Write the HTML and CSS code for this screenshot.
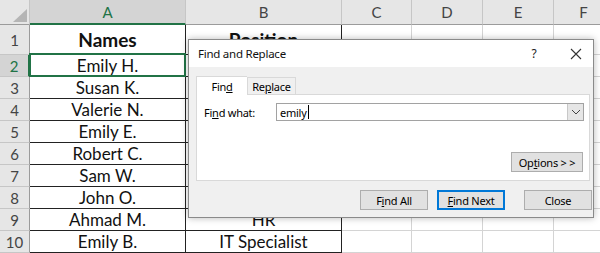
FILE: index.html
```html
<!DOCTYPE html>
<html>
<head>
<meta charset="utf-8">
<title>Find and Replace</title>
<link rel="stylesheet" href="styles.css">
</head>
<body>
<div class="sheet">
  <div class="corner"><svg width="30" height="25" viewBox="0 0 30 25"><polygon points="13,22 27,22 27,9" fill="#b5b5b5"/></svg></div>
  <div class="ch sel">A</div><div class="ch">B</div><div class="ch">C</div><div class="ch">D</div><div class="ch">E</div><div class="ch">F</div>

  <div class="rh">1</div><div class="c t th">Names</div><div class="c t th">Position</div><div class="c"></div><div class="c"></div><div class="c"></div><div class="c"></div>
  <div class="rh sel">2</div><div class="c t active">Emily H.</div><div class="c t"></div><div class="c"></div><div class="c"></div><div class="c"></div><div class="c"></div>
  <div class="rh">3</div><div class="c t">Susan K.</div><div class="c t"></div><div class="c"></div><div class="c"></div><div class="c"></div><div class="c"></div>
  <div class="rh">4</div><div class="c t">Valerie N.</div><div class="c t"></div><div class="c"></div><div class="c"></div><div class="c"></div><div class="c"></div>
  <div class="rh">5</div><div class="c t">Emily E.</div><div class="c t"></div><div class="c"></div><div class="c"></div><div class="c"></div><div class="c"></div>
  <div class="rh">6</div><div class="c t">Robert C.</div><div class="c t"></div><div class="c"></div><div class="c"></div><div class="c"></div><div class="c"></div>
  <div class="rh">7</div><div class="c t">Sam W.</div><div class="c t"></div><div class="c"></div><div class="c"></div><div class="c"></div><div class="c"></div>
  <div class="rh">8</div><div class="c t">John O.</div><div class="c t"></div><div class="c"></div><div class="c"></div><div class="c"></div><div class="c"></div>
  <div class="rh">9</div><div class="c t">Ahmad M.</div><div class="c t">HR</div><div class="c"></div><div class="c"></div><div class="c"></div><div class="c"></div>
  <div class="rh">10</div><div class="c t">Emily B.</div><div class="c t">IT Specialist</div><div class="c"></div><div class="c"></div><div class="c"></div><div class="c"></div>
</div>

<div class="dlg">
  <div class="tbar">
    <span class="ttl">Find and Replace</span>
    <span class="help">?</span>
    <span class="close-x"><svg width="12" height="12" viewBox="0 0 12 12"><path d="M1 1 L11 11 M11 1 L1 11" stroke="#333" stroke-width="1.1" fill="none"/></svg></span>
  </div>
  <div class="dbody">
    <div class="tabs">
      <div class="tab on">Fin<u>d</u></div>
      <div class="tab">Re<u>p</u>lace</div>
    </div>
    <div class="panel">
      <div class="frow">
        <span class="lbl">Fi<u>n</u>d what:</span>
        <div class="inp">
          <span class="val">emily</span><span class="caret"></span>
          <span class="dd"><svg width="10" height="6" viewBox="0 0 10 6"><path d="M1 1 L5 5 L9 1" stroke="#444" stroke-width="1" fill="none"/></svg></span>
        </div>
      </div>
      <div class="orow"><span class="btn opt">Op<u>t</u>ions &gt; &gt;</span></div>
    </div>
    <div class="brow">
      <span class="btn">F<u>i</u>nd All</span>
      <span class="btn def"><u>F</u>ind Next</span>
      <span class="btn cls">Close</span>
    </div>
  </div>
</div>
</body>
</html>
```

FILE: styles.css
```css
* { box-sizing: border-box; margin: 0; padding: 0; }
html, body { width: 600px; height: 253px; overflow: hidden; background: #fff; }
body { position: relative; font-family: Lato, "Liberation Sans", sans-serif; }

.sheet {
  display: grid;
  grid-template-columns: 30px 156px 156px 70px 71px 71px 60px;
  grid-template-rows: 25px 30px repeat(9, 22px);
}
.corner {
  background: #e6e6e6;
  border-right: 1px solid #c6c6c6;
  border-bottom: 1px solid #9b9b9b;
}
.corner svg { display: block; }
.ch {
  background: #e6e6e6;
  border-right: 1px solid #c6c6c6;
  border-bottom: 1px solid #9b9b9b;
  display: flex; align-items: center; justify-content: center;
  font-size: 15px; color: #444;
}
.ch.sel { background: #d4d4d4; color: #217346; border-bottom: 2px solid #217346; }
.rh {
  background: #e6e6e6;
  border-right: 1px solid #9b9b9b;
  border-bottom: 1px solid #c6c6c6;
  display: flex; align-items: center; justify-content: center;
  font-size: 15px; color: #444;
}
.rh.sel { background: #d4d4d4; color: #217346; border-right: 2px solid #217346; }
.c { border-right: 1px solid #d4d4d4; border-bottom: 1px solid #d4d4d4; }
.t {
  border-color: #222;
  display: flex; align-items: center; justify-content: center;
  font-size: 17px; color: #111;
  white-space: nowrap;
}
.th { font-weight: 700; font-size: 19px; }
.active { position: relative; }
.active::after {
  content: "";
  position: absolute;
  top: -2px; left: -1px; right: -1px; bottom: -1px;
  border: 2px solid #217346;
}

/* dialog */
.dlg {
  position: absolute;
  left: 188px; top: 39px;
  width: 406px; height: 179px;
  border: 1px solid #8a8a8a;
  background: #f0f0f0;
  box-shadow: 0 0 7px rgba(0,0,0,0.28);
  font-family: "Noto Sans", "Open Sans", sans-serif;
  font-size: 11px;
  letter-spacing: -0.25px;
  color: #000;
  display: flex; flex-direction: column;
}
.tbar {
  height: 27px;
  background: #fff;
  display: flex; align-items: center;
  padding: 0 7px 0 9px;
}
.ttl { flex: 1; font-size: 11.5px; color: #111; }
.help { width: 16px; text-align: center; margin-right: 24px; font-size: 12px; color: #222; }
.close-x { width: 20px; display: flex; justify-content: center; }
.close-x svg { display: block; }

.dbody { flex: 1; padding: 9px 3px 0 7px; display: flex; flex-direction: column; }
.tabs { display: flex; align-items: flex-end; height: 18px; position: relative; z-index: 1; }
.tab {
  height: 17px;
  width: 49px;
  border: 1px solid #d9d9d9;
  border-bottom: none;
  background: #f0f0f0;
  display: flex; align-items: center; justify-content: center;
  padding-top: 1px;
}
.tab.on {
  height: 19px;
  width: 51px;
  background: #fff;
  margin-bottom: -1px;
  border-right: none;
}
u { text-decoration: underline; text-underline-offset: 1px; text-decoration-thickness: 1px; }

.panel {
  height: 87px;
  background: #fff;
  border: 1px solid #d9d9d9;
  padding: 8px 5px 8px 7px;
  display: flex; flex-direction: column; justify-content: space-between;
}
.frow { display: flex; align-items: center; height: 18px; }
.lbl { width: 72px; }
.inp {
  flex: 1; height: 18px;
  border: 1px solid #a2a2a2;
  display: flex; align-items: center;
  padding-left: 3px;
}
.val { color: #000; }
.caret { width: 1px; height: 14px; background: #000; margin-left: 1px; }
.dd {
  margin-left: auto;
  width: 16px; height: 16px;
  background: #e6e6e6;
  border-left: 1px solid #c8c8c8;
  display: flex; align-items: center; justify-content: center;
}
.dd svg { display: block; }
.orow { display: flex; justify-content: flex-end; padding-right: 1px; }

.btn {
  display: flex; align-items: center; justify-content: center;
  height: 20px; width: 68px;
  background: #e1e1e1;
  border: 1px solid #adadad;
  color: #000;
}
.opt { width: 72px; }
.brow { display: flex; justify-content: flex-end; margin-top: 9px; margin-right: -2px; }
.def { margin-left: 9px; border-color: #0078d7; box-shadow: inset 0 0 0 1px #0078d7; }
.cls { margin-left: 19px; }
```
